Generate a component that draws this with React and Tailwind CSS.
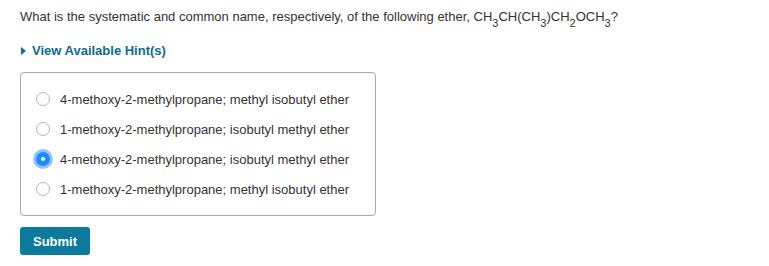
export default function App() {
  const opts = [
    "4-methoxy-2-methylpropane; methyl isobutyl ether",
    "1-methoxy-2-methylpropane; isobutyl methyl ether",
    "4-methoxy-2-methylpropane; isobutyl methyl ether",
    "1-methoxy-2-methylpropane; methyl isobutyl ether",
  ];
  const sub = "text-[11px] align-[-3px] leading-none";
  return (
    <div className="w-[769px] h-[266px] bg-white px-5 pt-[9px] text-[13px] text-[#333] [font-family:'Liberation_Sans',Arial,sans-serif]">
      <p className="leading-[15px] h-[15px]">
        What is the systematic and common name, respectively, of the following ether, CH<sub className={sub}>3</sub>CH(CH<sub className={sub}>3</sub>)CH<sub className={sub}>2</sub>OCH<sub className={sub}>3</sub>?
      </p>
      <div className="mt-[19px] flex items-center gap-[6px] text-[#0d6d8e] font-bold leading-[15px]">
        <svg width="5" height="8" viewBox="0 0 5 8" className="ml-[1px]"><path d="M0 0 L5 4 L0 8 Z" fill="#0d6d8e" /></svg>
        <span>View Available Hint(s)</span>
      </div>
      <div className="mt-[14px] w-[356px] h-[144px] border border-[#aaa] rounded-[4px] pt-[11px] flex flex-col">
        {opts.map((o, i) => (
          <label key={i} className="flex items-center h-[30px]">
            {i === 2 ? (
              <span className="ml-[15px] w-[14px] h-[14px] rounded-full bg-[#1a8cff] ring-[3px] ring-[#8fc4ff] flex items-center justify-center">
                <span className="w-[4px] h-[4px] rounded-full bg-white" />
              </span>
            ) : (
              <span className="ml-[15px] w-[14px] h-[14px] rounded-full border border-[#b5b5b5] bg-white" />
            )}
            <span className="ml-[10px] leading-[15px]">{o}</span>
          </label>
        ))}
      </div>
      <button className="mt-[11px] w-[70px] h-[28px] rounded-[3px] bg-[#0b7a9c] text-white font-bold text-[13px] leading-none [font-family:'Liberation_Sans',Arial,sans-serif]">
        Submit
      </button>
    </div>
  );
}
